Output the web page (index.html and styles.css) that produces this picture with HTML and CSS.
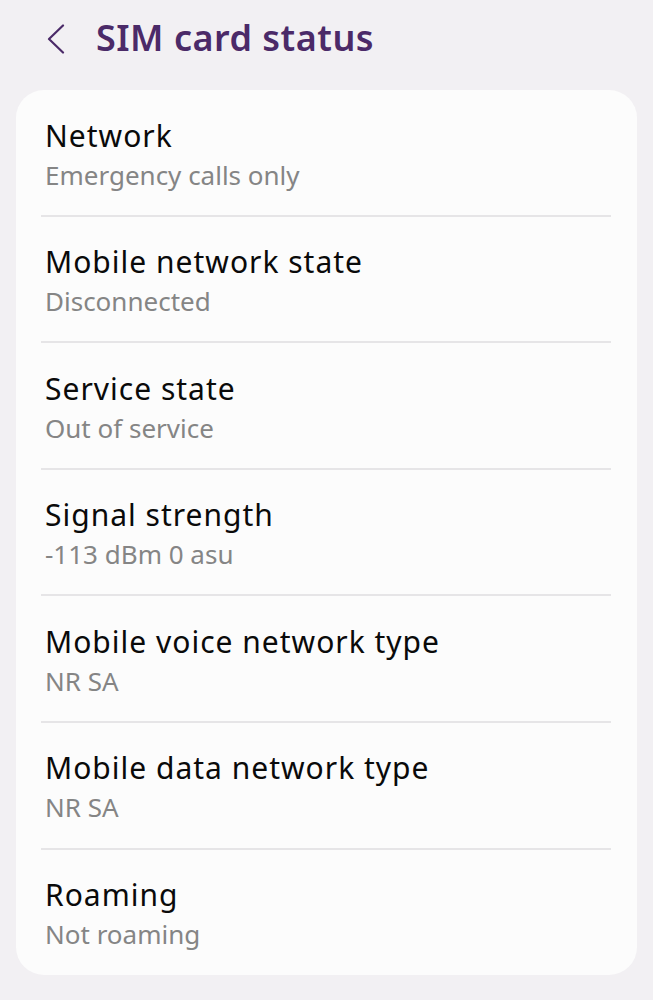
FILE: index.html
```html
<!DOCTYPE html>
<html lang="en">
<head>
    <meta charset="UTF-8">
    <meta name="viewport" content="width=device-width, initial-scale=1.0">
    <title>SIM card status</title>
    <link rel="stylesheet" href="styles.css">
</head>
<body>
    <!-- Header -->
    <header class="app-bar">
        <button class="back-btn" aria-label="Back">
            <svg width="20" height="30" viewBox="0 0 20 30">
                <path d="M17 1.5 L3 15 L17 28.5" fill="none" stroke="#4b2a68" stroke-width="2.2" stroke-linecap="round" stroke-linejoin="round"/>
            </svg>
        </button>
        <h1 class="title">SIM card status</h1>
    </header>

    <!-- Status list -->
    <div class="card">
        <div class="row">
            <div class="row-title">Network</div>
            <div class="row-sub">Emergency calls only</div>
        </div>
        <div class="row">
            <div class="row-title">Mobile network state</div>
            <div class="row-sub">Disconnected</div>
        </div>
        <div class="row">
            <div class="row-title">Service state</div>
            <div class="row-sub">Out of service</div>
        </div>
        <div class="row">
            <div class="row-title">Signal strength</div>
            <div class="row-sub">-113 dBm 0 asu</div>
        </div>
        <div class="row">
            <div class="row-title">Mobile voice network type</div>
            <div class="row-sub">NR SA</div>
        </div>
        <div class="row">
            <div class="row-title">Mobile data network type</div>
            <div class="row-sub">NR SA</div>
        </div>
        <div class="row">
            <div class="row-title">Roaming</div>
            <div class="row-sub">Not roaming</div>
        </div>
    </div>
</body>
</html>
```

FILE: styles.css
```css
/* General */
body {
    margin: 0;
    background-color: #f2f0f3;
    font-family: 'Noto Sans', 'Open Sans', sans-serif;
    color: #000000;
    height: 1000px;
    overflow: hidden;
}

/* Header */
.app-bar {
    display: flex;
    align-items: center;
    height: 74px;
    padding-left: 46px;
}

.back-btn {
    display: flex;
    background: none;
    border: none;
    padding: 0;
    margin: 4px 30px 0 0;
}

.title {
    margin: 0;
    font-size: 36px;
    font-weight: 600;
    letter-spacing: 0.5px;
    color: #4b2a68;
}

/* Card */
.card {
    margin: 16px 16px 0 16px;
    background-color: #fcfcfc;
    border-radius: 28px;
    padding: 0 26px 0 25px;
}

.row {
    padding: 25.5px 0 22.1px 4px;
    border-bottom: 2px solid #e6e5e7;
}

.row:last-child {
    border-bottom: none;
    padding-bottom: 23px;
}

.row-title {
    font-size: 30px;
    line-height: 40px;
    letter-spacing: 1px;
    color: #0a0a0a;
}

.row-sub {
    margin-top: 1px;
    font-size: 26px;
    line-height: 36px;
    color: #858585;
}
```
